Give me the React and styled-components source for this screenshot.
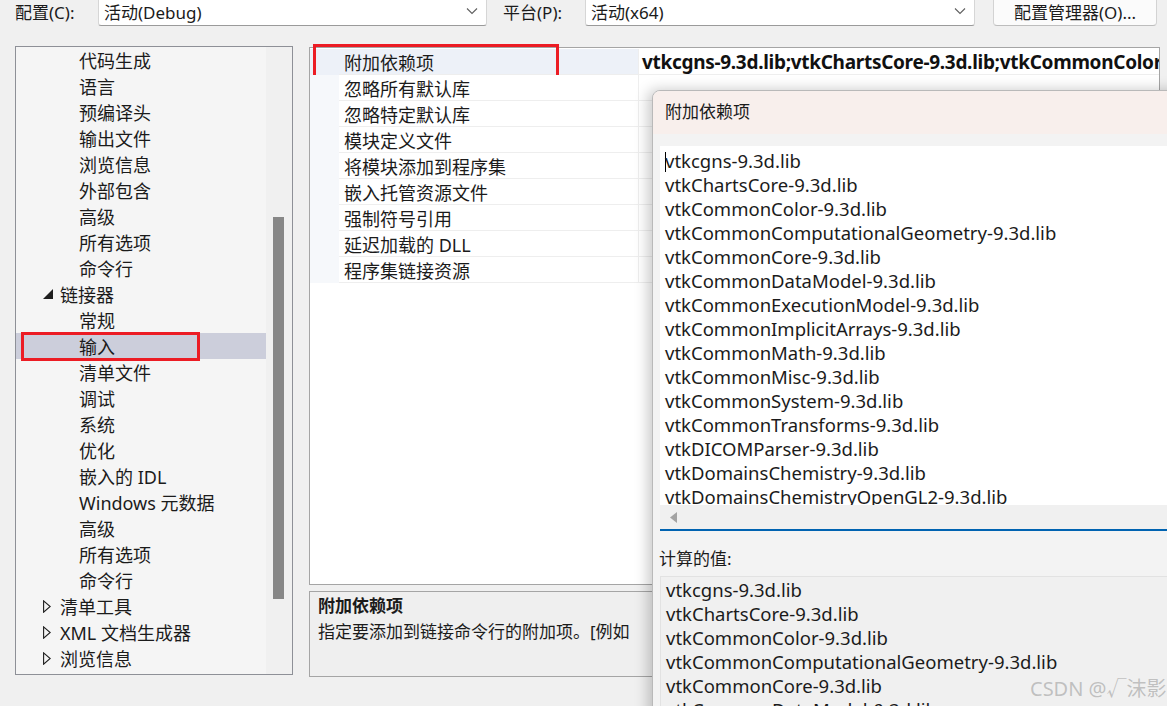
import React from "react";
import styled, { createGlobalStyle } from "styled-components";

const GlobalStyle = createGlobalStyle`
  html, body { margin: 0; padding: 0; background: #f0f0f0; overflow: hidden; }
  body {
    font-family: "Noto Sans", "Noto Sans CJK SC", sans-serif;
    color: #1b1b1b;
  }
  * { box-sizing: border-box; }
`;

const Page = styled.div`
  position: relative;
  width: 1167px;
  height: 706px;
  overflow: hidden;
  background: #f0f0f0;
  display: flex;
  flex-direction: column;
`;

const TopBar = styled.div`
  display: flex;
  align-items: stretch;
  height: 26px;
  padding-left: 15px;
  font-size: 17px;
`;

const BarLabel = styled.div`
  width: ${(p) => p.$w}px;
  margin-left: ${(p) => p.$ml || 0}px;
  display: flex;
  align-items: center;
  padding-bottom: 3px;
  white-space: nowrap;
`;

const Combo = styled.div`
  width: ${(p) => p.$w}px;
  background: #fff;
  border: 1px solid #d6d6d6;
  border-top: none;
  border-bottom-color: #9a9a9a;
  border-radius: 0 0 3px 3px;
  display: flex;
  align-items: center;
  justify-content: space-between;
  padding: 0 8px 3px 5px;
`;

const Button = styled.div`
  width: 164px;
  margin-left: 18px;
  background: #fbfbfb;
  border: 1px solid #d3d3d3;
  border-top: none;
  border-bottom-color: #bdbdbd;
  border-radius: 0 0 4px 4px;
  display: flex;
  align-items: center;
  justify-content: center;
  padding-bottom: 3px;
  white-space: nowrap;
`;

const Main = styled.div`
  display: flex;
  margin-top: 20px;
  padding-left: 15px;
  gap: 16px;
`;

const TreePanel = styled.div`
  width: 278px;
  height: 629px;
  border: 1px solid #8e9097;
  display: flex;
`;

const TreeList = styled.div`
  width: 250px;
  background: #f5f5f5;
  font-size: 18px;
`;

const TreeRow = styled.div`
  position: relative;
  height: 26px;
  display: flex;
  align-items: center;
  padding-left: ${(p) => (p.$level === 1 ? 27 : 63)}px;
  background: ${(p) => (p.$selected ? "#cccedb" : "transparent")};
  white-space: nowrap;
`;

const Toggle = styled.span`
  width: 17px;
  display: flex;
  align-items: center;
`;

const Highlight = styled.div`
  position: absolute;
  left: ${(p) => p.$l}px;
  top: ${(p) => p.$t}px;
  width: ${(p) => p.$w}px;
  height: ${(p) => p.$h}px;
  border: 3px solid #ec1c24;
  pointer-events: none;
`;

const VScroll = styled.div`
  width: 26px;
  background: #f0f0f0;
  padding: 170px 0 0 7px;
`;

const Thumb = styled.div`
  width: 11px;
  height: 382px;
  background: #878787;
`;

const RightCol = styled.div`
  width: 851px;
  display: flex;
  flex-direction: column;
  gap: 6px;
  padding-top: 1px;
`;

const Grid = styled.div`
  height: 538px;
  background: #fff;
  border: 1px solid #a5a5a5;
  padding-top: 1px;
  font-size: 18px;
`;

const GridRow = styled.div`
  position: relative;
  display: flex;
  height: 26px;
`;

const Gutter = styled.div`
  width: 29px;
  background: ${(p) => (p.$selected ? "#edf1f8" : "#f6f8fb")};
`;

const NameCell = styled.div`
  width: 299px;
  padding-left: 5px;
  display: flex;
  align-items: center;
  background: ${(p) => (p.$selected ? "#edf1f8" : "#fff")};
  border-bottom: 1px solid #eeeeee;
  white-space: nowrap;
`;

const ValueCell = styled.div`
  flex: 1;
  padding-left: 3px;
  display: flex;
  align-items: center;
  border-left: 1px solid #eeeeee;
  border-bottom: 1px solid #eeeeee;
  font-weight: 700;
  font-size: 19px;
  letter-spacing: -0.3px;
  white-space: nowrap;
  overflow: hidden;
  color: #111;
`;

const Desc = styled.div`
  height: 86px;
  background: #efefef;
  border: 1px solid #a5a5a5;
  padding: 1px 8px 0;
  font-size: 17px;
  line-height: 26px;
`;

const DescTitle = styled.div`
  font-weight: 700;
`;

const Dialog = styled.div`
  position: absolute;
  left: 652px;
  top: 90px;
  width: 540px;
  height: 640px;
  background: #f3f3f3;
  border: 1px solid #b9b9b9;
  border-radius: 8px 0 0 0;
  box-shadow: -4px 0 14px rgba(0, 0, 0, 0.22);
  display: flex;
  flex-direction: column;
  overflow: hidden;
`;

const DialogHeader = styled.div`
  height: 43px;
  background: #f8efec;
  padding: 0 0 4px 12px;
  display: flex;
  align-items: center;
  font-size: 17px;
  flex-shrink: 0;
`;

const DialogBody = styled.div`
  padding: 12px 0 0 7px;
  display: flex;
  flex-direction: column;
`;

const Editor = styled.div`
  height: 359px;
  background: #fff;
  padding: 3px 5px 0;
  overflow: hidden;
  font-size: 18.5px;
  line-height: 24px;
  white-space: nowrap;
`;

const Line = styled.div`
  height: 24px;
`;

const Caret = styled.span`
  display: inline-block;
  width: 1px;
  height: 20px;
  margin-right: -1px;
  background: #000;
  vertical-align: -4px;
`;

const HScroll = styled.div`
  height: 26px;
  background: #f0f0f0;
  display: flex;
  align-items: center;
  padding-left: 10px;
  border-bottom: 2px solid #0063b1;
`;

const CompLabel = styled.div`
  margin: 16px 0 0 -1px;
  font-size: 17px;
  line-height: 24px;
`;

const CompBox = styled.div`
  margin-top: 5px;
  background: #f0f0f0;
  border: 1px solid #e2e2e2;
  padding: 1px 5px 0;
  font-size: 18.5px;
  line-height: 24px;
  white-space: nowrap;
  height: 200px;
`;

const Watermark = styled.div`
  position: absolute;
  left: 1030px;
  top: 673px;
  font-size: 20px;
  color: rgba(150, 150, 150, 0.55);
  white-space: nowrap;
`;

const Chevron = () => (
  <svg width="12" height="8" viewBox="0 0 12 8">
    <polyline points="1,1.5 6,6.5 11,1.5" fill="none" stroke="#5f5f5f" strokeWidth="1.1" />
  </svg>
);

const Expanded = () => (
  <svg width="10" height="10" viewBox="0 0 10 10">
    <polygon points="10,0 10,10 0,10" fill="#1e1e1e" />
  </svg>
);

const Collapsed = () => (
  <svg width="8" height="13" viewBox="0 0 8 13">
    <polygon points="0.6,0.8 7.2,6.5 0.6,12.2" fill="none" stroke="#1e1e1e" strokeWidth="1.1" />
  </svg>
);

const LeftArrow = () => (
  <svg width="8" height="11" viewBox="0 0 8 11">
    <polygon points="7,0 7,11 0,5.5" fill="#a3a3a3" />
  </svg>
);

const tree = [
  { t: "代码生成", l: 2 },
  { t: "语言", l: 2 },
  { t: "预编译头", l: 2 },
  { t: "输出文件", l: 2 },
  { t: "浏览信息", l: 2 },
  { t: "外部包含", l: 2 },
  { t: "高级", l: 2 },
  { t: "所有选项", l: 2 },
  { t: "命令行", l: 2 },
  { t: "链接器", l: 1, open: true },
  { t: "常规", l: 2 },
  { t: "输入", l: 2, sel: true },
  { t: "清单文件", l: 2 },
  { t: "调试", l: 2 },
  { t: "系统", l: 2 },
  { t: "优化", l: 2 },
  { t: "嵌入的 IDL", l: 2 },
  { t: "Windows 元数据", l: 2 },
  { t: "高级", l: 2 },
  { t: "所有选项", l: 2 },
  { t: "命令行", l: 2 },
  { t: "清单工具", l: 1 },
  { t: "XML 文档生成器", l: 1 },
  { t: "浏览信息", l: 1 },
];

const props = [
  "附加依赖项",
  "忽略所有默认库",
  "忽略特定默认库",
  "模块定义文件",
  "将模块添加到程序集",
  "嵌入托管资源文件",
  "强制符号引用",
  "延迟加载的 DLL",
  "程序集链接资源",
];

const libs = [
  "vtkcgns-9.3d.lib",
  "vtkChartsCore-9.3d.lib",
  "vtkCommonColor-9.3d.lib",
  "vtkCommonComputationalGeometry-9.3d.lib",
  "vtkCommonCore-9.3d.lib",
  "vtkCommonDataModel-9.3d.lib",
  "vtkCommonExecutionModel-9.3d.lib",
  "vtkCommonImplicitArrays-9.3d.lib",
  "vtkCommonMath-9.3d.lib",
  "vtkCommonMisc-9.3d.lib",
  "vtkCommonSystem-9.3d.lib",
  "vtkCommonTransforms-9.3d.lib",
  "vtkDICOMParser-9.3d.lib",
  "vtkDomainsChemistry-9.3d.lib",
  "vtkDomainsChemistryOpenGL2-9.3d.lib",
  "vtkexpat-9.3d.lib",
];

export default function App() {
  return (
    <Page>
      <GlobalStyle />
      <TopBar>
        <BarLabel $w={83}>配置(C):</BarLabel>
        <Combo $w={389}>
          <span>活动(Debug)</span>
          <Chevron />
        </Combo>
        <BarLabel $w={82} $ml={16}>平台(P):</BarLabel>
        <Combo $w={390}>
          <span>活动(x64)</span>
          <Chevron />
        </Combo>
        <Button>配置管理器(O)...</Button>
      </TopBar>

      <Main>
        <TreePanel>
          <TreeList>
            {tree.map((n, i) => (
              <TreeRow key={i} $level={n.l} $selected={n.sel}>
                {n.l === 1 && <Toggle>{n.open ? <Expanded /> : <Collapsed />}</Toggle>}
                {n.t}
                {n.sel && <Highlight $l={5} $t={-1} $w={179} $h={29} />}
              </TreeRow>
            ))}
          </TreeList>
          <VScroll>
            <Thumb />
          </VScroll>
        </TreePanel>

        <RightCol>
          <Grid>
            {props.map((p, i) => (
              <GridRow key={i}>
                <Gutter $selected={i === 0} />
                <NameCell $selected={i === 0}>{p}</NameCell>
                <ValueCell>
                  {i === 0 ? "vtkcgns-9.3d.lib;vtkChartsCore-9.3d.lib;vtkCommonColor" : ""}
                </ValueCell>
                {i === 0 && <Highlight $l={3} $t={-5} $w={246} $h={35} />}
              </GridRow>
            ))}
          </Grid>
          <Desc>
            <DescTitle>附加依赖项</DescTitle>
            <div>指定要添加到链接命令行的附加项。[例如</div>
          </Desc>
        </RightCol>
      </Main>

      <Dialog>
        <DialogHeader>附加依赖项</DialogHeader>
        <DialogBody>
          <Editor>
            {libs.map((l, i) => (
              <Line key={i}>
                {i === 0 && <Caret />}
                {l}
              </Line>
            ))}
          </Editor>
          <HScroll>
            <LeftArrow />
          </HScroll>
          <CompLabel>计算的值:</CompLabel>
          <CompBox>
            {libs.slice(0, 7).map((l, i) => (
              <Line key={i}>{l}</Line>
            ))}
          </CompBox>
        </DialogBody>
      </Dialog>

      <Watermark>CSDN @√沫影</Watermark>
    </Page>
  );
}
